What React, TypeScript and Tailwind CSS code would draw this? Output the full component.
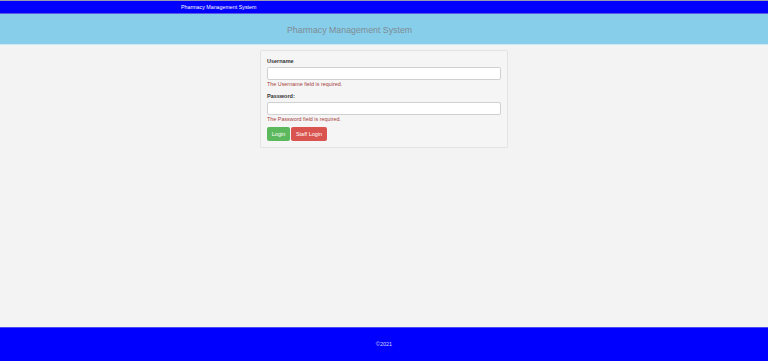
import React from 'react';

export default function App() {
  return (
    <div className="flex min-h-screen flex-col bg-[#f3f3f3] font-['Liberation_Sans',Arial,sans-serif]">
      {/* Navbar */}
      <div className="flex h-[14px] items-center border-t border-t-[#9a9ab8] border-b border-b-[#5a5ae6] bg-[#0000ff] pl-[181px]">
        <span className="text-[5.3px] leading-[8px] text-white">Pharmacy Management System</span>
      </div>

      {/* Header band */}
      <div className="h-[31px] border-b border-b-[#cfe9f4] bg-[#87ceeb] pl-[287px] pt-[1px]">
        <h1 className="text-[8.8px] leading-[30px] text-[#7f8c93]">Pharmacy Management System</h1>
      </div>

      {/* Login panel */}
      <main className="flex-1 pt-[5px]">
        <div className="mx-auto w-[248px] rounded-[2px] border border-[#e3e3e3] bg-[#f5f5f5] px-[6px] pt-[6px] pb-[6px]">
          <label className="block text-[5.5px] font-bold leading-[8px] text-[#333]">Username</label>
          <input
            type="text"
            className="mt-[2px] block h-[13px] w-full rounded-[2px] border border-[#d0d0d0] bg-white"
          />
          <p className="text-[5.4px] leading-[8px] text-[#a94442]">The Username field is required.</p>

          <label className="mt-[4px] block text-[5.5px] font-bold leading-[8px] text-[#333]">Password:</label>
          <input
            type="password"
            className="mt-[2px] block h-[13px] w-full rounded-[2px] border border-[#d0d0d0] bg-white"
          />
          <p className="text-[5.4px] leading-[8px] text-[#a94442]">The Password field is required.</p>

          <div className="mt-[4px] flex gap-[1px]">
            <button className="h-[14px] w-[23px] rounded-[2px] bg-[#5cb85c] text-[5.5px] text-white">Login</button>
            <button className="h-[14px] w-[36px] rounded-[2px] bg-[#d9534f] text-[5.5px] text-white">Staff Login</button>
          </div>
        </div>
      </main>

      {/* Footer */}
      <footer className="flex h-[34px] items-center justify-center border-t border-t-[#4a4af0] bg-[#0000ff]">
        <span className="text-[5.5px] text-[#d8d8ff]">©2021</span>
      </footer>
    </div>
  );
}
